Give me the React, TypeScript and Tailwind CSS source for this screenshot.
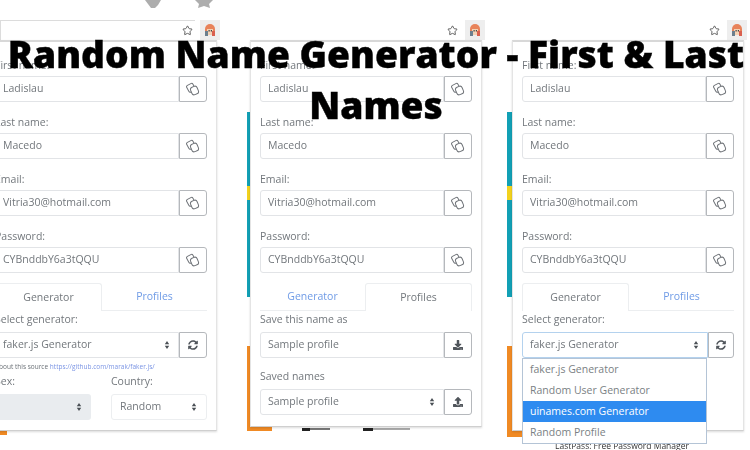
import React from "react";
import { Star } from "lucide-react";
import { FaDownload, FaSyncAlt, FaUpload } from "react-icons/fa";

const fields = [
  { label: "First name:", value: "Ladislau" },
  { label: "Last name:", value: "Macedo" },
  { label: "Email:", value: "Vitria30@hotmail.com" },
  { label: "Password:", value: "CYBnddbY6a3tQQU" },
];

const CopyIcon = () => (
  <svg width="14" height="14" viewBox="0 0 14 14" fill="none" stroke="#6f7378" strokeWidth="1">
    <rect x="1.5" y="2" width="7" height="7.5" rx="1.6" transform="rotate(-28 5 6)" />
    <rect x="5" y="4.5" width="7" height="8" rx="2.4" fill="#fff" transform="rotate(-22 8.5 8.5)" />
  </svg>
);

const Arrows = () => (
  <svg width="6" height="10" viewBox="0 0 6 10" fill="#4a4f55">
    <path d="M3 1 5.2 4.2H.8zM3 9 .8 5.8h4.4z" />
  </svg>
);

const ExtensionIcon = () => (
  <div className="flex h-[20px] w-[20px] items-center justify-center bg-[#eeeeee]">
    <svg width="14" height="14" viewBox="0 0 14 14">
      <path d="M2 6a5 5 0 0 1 10 0v2H2z" fill="#e8835a" />
      <path d="M4 6h6v6H4z" fill="#f3d2b5" />
      <path d="M2 8h3v5H2z" fill="#6b7f8e" />
      <path d="M9 8h3v5H9z" fill="#d9604f" />
      <path d="M5.500 7h1.200v1.500H5.500zM7.800 7H9v1.500H7.800z" fill="#444" />
    </svg>
  </div>
);

const TopIcons = () => (
  <div className="flex h-[8px] overflow-hidden pl-[160px]">
    <svg width="16" height="8" viewBox="0 0 16 8" fill="#8a8a8a" className="opacity-70">
      <path d="M0 0h16l-3 5-3 3H6L3 4z" />
    </svg>
    <svg width="18" height="8" viewBox="0 0 18 8" fill="#8a8a8a" className="ml-[34px] opacity-70">
      <path d="M0 0h18l-4 4 1 4-6-2-6 2 1-4z" />
    </svg>
  </div>
);

const BrowserBar = ({ showUrl }: { showUrl?: boolean }) => (
  <div className="flex h-[40px] flex-col justify-between">
    {showUrl ? <TopIcons /> : <div />}
    <div className="mr-[-3px] flex items-center justify-end">
      <div className={`flex h-[20px] items-center justify-end pr-[2px] ${showUrl ? "w-[195px] border border-r-0 border-b-0 border-[#dcdcdc]" : "w-[30px]"}`}>
        <Star size={11} strokeWidth={2} color="#555" />
      </div>
      <div className="ml-[5px]">
        <ExtensionIcon />
      </div>
    </div>
  </div>
);

const InputGroup = ({ value, icon }: { value: string; icon: React.ReactNode }) => (
  <div className="flex h-[26px]">
    <div className="flex min-w-0 flex-1 items-center rounded-l-[3px] border border-[#e2e4e7] pl-[7px] pr-[8px] text-[10.5px] text-[#72777c]">
      {value}
    </div>
    <div className="flex w-[28px] shrink-0 items-center justify-center rounded-r-[3px] border border-[#b5b8bc]">{icon}</div>
  </div>
);

const SelectGroup = ({ value, icon, focused }: { value: string; icon: React.ReactNode; focused?: boolean }) => (
  <div className="flex h-[26px]">
    <div
      className={`flex min-w-0 flex-1 items-center justify-between rounded-l-[3px] border pl-[7px] pr-[8px] text-[10.5px] text-[#72777c] ${
        focused ? "border-[#b4d2ee]" : "border-[#e2e4e7]"
      }`}
    >
      {value}
      <Arrows />
    </div>
    <div className={`flex shrink-0 items-center justify-center rounded-r-[3px] border border-[#b5b8bc] text-[#50555b] ${focused ? "w-[26px]" : "w-[28px]"}`}>{icon}</div>
  </div>
);

const Tabs = ({ active }: { active: "Generator" | "Profiles" }) => (
  <div className="mt-[5px] flex h-[28px] text-[10.5px]">
    {(["Generator", "Profiles"] as const).map((tab) => (
      <div
        key={tab}
        className={`flex flex-1 items-center justify-center ${
          tab === active
            ? "rounded-t-[3px] border border-b-0 border-[#eceef0] text-[#72777c]"
            : "border-b border-[#eceef0] text-[#6f9be6]"
        }`}
      >
        {tab}
      </div>
    ))}
  </div>
);

const Fields = () => (
  <div className="flex flex-col">
    {fields.map((f) => (
      <div key={f.label} className="mb-[5px]">
        <div className="flex h-[26px] items-end pb-[6px] text-[10.5px] leading-none text-[#72777c]">{f.label}</div>
        <InputGroup value={f.value} icon={<CopyIcon />} />
      </div>
    ))}
  </div>
);

const Label = ({ children }: { children: React.ReactNode }) => (
  <div className="flex h-[21px] items-end pb-[8px] text-[10.5px] leading-none text-[#72777c]">{children}</div>
);

// coloured edge of the page behind the popup
const Strip = ({ width, orange }: { width: string; orange: string }) => (
  <div className={`flex shrink-0 flex-col ${width}`}>
    <div className="h-[112px] shrink-0" />
    <div className="h-[74px] shrink-0 bg-[#12a0b5]" />
    <div className="h-[14px] shrink-0 bg-[#f2d21e]" />
    <div className="h-[97px] shrink-0 bg-[#12a0b5]" />
    <div className="h-[49px] shrink-0" />
    <div className={`shrink-0 bg-[#f08a24] ${orange}`} />
  </div>
);

const Popup = ({ children, height }: { children: React.ReactNode; height: string }) => (
  <div className={`relative w-[232px] shrink-0 border-x border-b border-t-2 border-x-[#e4e4e4] border-b-[#cfcfcf] border-t-[#d8d8d8] bg-white px-[9px] pt-[8px] shadow-[0_1px_2px_rgba(0,0,0,0.15)] ${height}`}>
    {children}
  </div>
);

const GeneratorBody = ({ withDetails }: { withDetails?: boolean }) => (
  <>
    <Tabs active="Generator" />
    <Label>Select generator:</Label>
    <SelectGroup value="faker.js Generator" icon={<FaSyncAlt size={10} />} focused={!withDetails} />
    {withDetails && (
      <>
        <div className="mt-[3px] h-[12px] whitespace-nowrap text-[6.5px] leading-[12px] text-[#6a7076]">
          About this source <span className="text-[#7a94e4]">https://github.com/marak/faker.js/</span>
        </div>
        <div className="flex gap-[20px]">
          <div className="flex-1">
            <Label>Sex:</Label>
            <div className="flex h-[26px] items-center justify-end rounded-[3px] bg-[#e9ecef] pr-[9px]">
              <Arrows />
            </div>
          </div>
          <div className="w-[96px]">
            <Label>Country:</Label>
            <div className="flex h-[26px] items-center justify-between rounded-[3px] border border-[#eceef0] pl-[8px] pr-[9px] text-[10.5px] text-[#72777c]">
              Random
              <Arrows />
            </div>
          </div>
        </div>
      </>
    )}
  </>
);

const DropdownMenu = () => (
  <div className="absolute left-[9px] top-[316px] z-10 w-[185px] border border-[#b4c4d6] bg-white text-[10.5px] text-[#7a7f84]">
    <div className="flex h-[21px] items-center pl-[7px]">faker.js Generator</div>
    <div className="flex h-[21px] items-center pl-[7px]">Random User Generator</div>
    <div className="flex h-[21px] items-center bg-[#2e8bf0] pl-[7px] text-white">uinames.com Generator</div>
    <div className="flex h-[21px] items-center pl-[7px]">Random Profile</div>
  </div>
);

// fragments of the page showing under the second popup
const PageBits = () => (
  <div className="flex h-[4px] items-center">
    <div className="h-[4px] w-[22px] bg-[#f08a24]" />
    <div className="ml-[30px] h-[3px] w-[8px] bg-[#222]" />
    <div className="h-[2px] w-[20px] bg-[#777]" />
    <div className="ml-[33px] h-[3px] w-[10px] bg-[#222]" />
    <div className="h-[2px] w-[37px] bg-[#aaa]" />
  </div>
);

export default function App() {
  return (
    <div className="relative h-[450px] w-[750px] overflow-hidden bg-white font-['Open_Sans',sans-serif]">
      <div className="flex h-full blur-[0.5px]">
        {/* first capture, cut off by the left edge */}
        <div className="ml-[-15px] w-[232px] shrink-0">
          <BrowserBar showUrl />
          <Popup height="h-[391px]">
            <Fields />
            <GeneratorBody withDetails />
          </Popup>
          <div className="ml-[15px] h-[4px] w-[7px] bg-[#f08a24]" />
        </div>

        {/* second capture, profiles tab */}
        <div className="ml-[30px] flex shrink-0">
          <Strip width="w-[3px]" orange="h-[85px]" />
          <div className="w-[232px]">
            <BrowserBar />
            <Popup height="h-[387px]">
              <Fields />
              <Tabs active="Profiles" />
              <Label>Save this name as</Label>
              <InputGroup value="Sample profile" icon={<FaDownload size={10} color="#50555b" />} />
              <div className="h-[10px]" />
              <Label>Saved names</Label>
              <SelectGroup value="Sample profile" icon={<FaUpload size={10} />} />
            </Popup>
            <PageBits />
          </div>
        </div>

        {/* third capture, generator list open */}
        <div className="ml-[25px] flex shrink-0">
          <Strip width="w-[5px]" orange="h-[91px]" />
          <div className="w-[232px]">
            <BrowserBar />
            <Popup height="h-[391px]">
              <Fields />
              <GeneratorBody />
              <DropdownMenu />
            </Popup>
            <div className="h-[6px] w-[10px] bg-[#f08a24]" />
            <div className="mt-[5px] pl-[43px] text-[8.5px] leading-none text-[#333]">LastPass: Free Password Manager</div>
          </div>
        </div>
      </div>

      <h1 className="absolute inset-x-0 top-[28px] pl-[2px] text-center text-[37.2px] font-extrabold leading-[51px] text-black [-webkit-text-stroke:0.4px_black]">
        Random Name Generator - First &amp; Last Names
      </h1>
    </div>
  );
}
